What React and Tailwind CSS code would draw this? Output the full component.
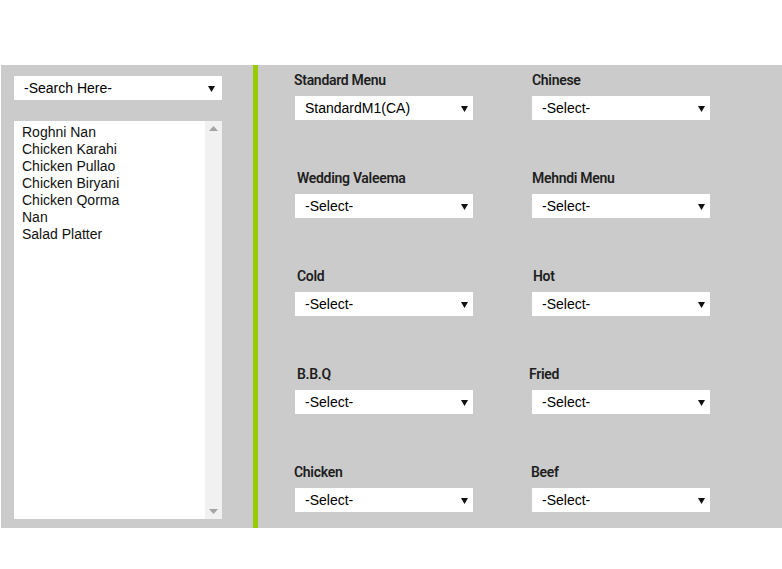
import React from 'react';

const items = ['Roghni Nan', 'Chicken Karahi', 'Chicken Pullao', 'Chicken Biryani', 'Chicken Qorma', 'Nan', 'Salad Platter'];

const rows = [
    [{ label: 'Standard Menu', value: 'StandardM1(CA)', lx: 'ml-[-1px]' }, { label: 'Chinese', value: '-Select-', lx: 'ml-0' }],
    [{ label: 'Wedding Valeema', value: '-Select-', lx: 'ml-[2px]' }, { label: 'Mehndi Menu', value: '-Select-', lx: 'ml-0' }],
    [{ label: 'Cold', value: '-Select-', lx: 'ml-[2px]' }, { label: 'Hot', value: '-Select-', lx: 'ml-px' }],
    [{ label: 'B.B.Q', value: '-Select-', lx: 'ml-[2px]' }, { label: 'Fried', value: '-Select-', lx: 'ml-[-3px]' }],
    [{ label: 'Chicken', value: '-Select-', lx: 'ml-[-1px]' }, { label: 'Beef', value: '-Select-', lx: 'ml-[-1px]' }],
];

function Arrow() {
    return (
        <svg width="7" height="7" viewBox="0 0 7 7" className="shrink-0">
            <path d="M0 1 L7 1 L3.5 7 Z" fill="#111" />
        </svg>
    );
}

function FakeSelect({ value, width, pr }) {
    return (
        <div className={`${width} ${pr} h-6 bg-white flex items-center justify-between pl-[10px] text-[14px] text-black font-['Liberation_Sans',Arial,sans-serif]`}>
            <span>{value}</span>
            <Arrow />
        </div>
    );
}

function Field({ label, value, lx }) {
    return (
        <div className="w-[178px]">
            <div className={`${lx} mt-px h-4 leading-4 text-[14px] font-semibold tracking-[-0.3px] text-[#1e1e1e] font-['Roboto',sans-serif]`}>
                {label}
            </div>
            <div className="mt-[8px]">
                <FakeSelect value={value} width="w-[178px]" pr="pr-[5px]" />
            </div>
        </div>
    );
}

export default function App() {
    return (
        <div className="w-[782px] h-[569px] bg-white pt-[65px]">
            <div className="ml-px h-[463px] bg-[#cbcbcb] flex">
                <div className="w-[252px] pl-[13px] pt-[11px]">
                    <FakeSelect value="-Search Here-" width="w-[208px]" pr="pr-[7px]" />
                    <div className="mt-[21px] w-[208px] h-[398px] bg-white flex">
                        <div className="flex-1 pl-[8px] pt-[3px] text-[14px] leading-[17px] text-[#111] font-['Liberation_Sans',Arial,sans-serif]">
                            {items.map(i => (
                                <div key={i}>{i}</div>
                            ))}
                        </div>
                        <div className="w-[17px] bg-[#f1f1f1] flex flex-col justify-between items-center py-[5px]">
                            <svg width="9" height="5" viewBox="0 0 9 5"><path d="M0 5 L9 5 L4.5 0 Z" fill="#a3a3a3" /></svg>
                            <svg width="9" height="5" viewBox="0 0 9 5"><path d="M0 0 L9 0 L4.5 5 Z" fill="#a3a3a3" /></svg>
                        </div>
                    </div>
                </div>
                <div className="w-[5px] bg-[#99cc00]" />
                <div className="flex-1 pl-[37px] pt-[6px] flex flex-col gap-[49px]">
                    {rows.map((r, idx) => (
                        <div key={idx} className="flex gap-[59px]">
                            <Field {...r[0]} />
                            <Field {...r[1]} />
                        </div>
                    ))}
                </div>
            </div>
        </div>
    );
}
